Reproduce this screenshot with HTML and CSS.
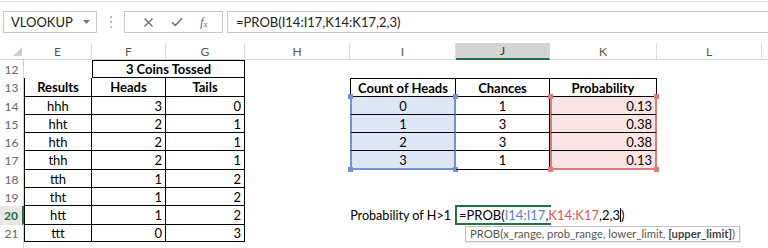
FILE: index.html
```html
<!DOCTYPE html>
<html>
<head>
<meta charset="utf-8">
<link rel="stylesheet" href="styles.css">
</head>
<body>
<div class="topline"></div>
<div class="fbar">
  <div class="namebox"><span class="nb-text">VLOOKUP</span><svg class="nb-arrow" width="7" height="4" viewBox="0 0 7 4"><path d="M0 0H7L3.5 4Z" fill="#7a7a7a"/></svg></div>
  <div class="grip"><i></i><i></i><i></i></div>
  <div class="btns">
    <svg class="ic" width="11" height="11" viewBox="0 0 11 11"><path d="M1.5 1.5L9.5 9.5M9.5 1.5L1.5 9.5" stroke="#6f6f6f" stroke-width="1.4" fill="none"/></svg>
    <svg class="ic" width="12" height="10" viewBox="0 0 12 10"><path d="M1 5.2L4.3 8.4L11 1.2" stroke="#6f6f6f" stroke-width="1.5" fill="none"/></svg>
    <span class="fx"><i>f</i><sub>x</sub></span>
  </div>
  <div class="formula">=PROB(I14:I17,K14:K17,2,3)</div>
</div>
<div class="sheet">
  <div class="row hdr">
    <div class="corner"><svg width="9" height="9" viewBox="0 0 9 9"><path d="M9 0V9H0Z" fill="#cfcfcf"/></svg></div>
    <div class="ch">E</div><div class="ch">F</div><div class="ch">G</div><div class="ch">H</div><div class="ch">I</div><div class="ch sel">J</div><div class="ch">K</div><div class="ch">L</div><div class="ch last"></div>
  </div>
  <div class="row h18">
    <div class="rh">12</div><div class="c"></div><div class="c t bl bt br bb b span2">3 Coins Tossed</div><div class="c"></div><div class="c"></div><div class="c"></div><div class="c"></div><div class="c"></div><div class="c"></div>
  </div>
  <div class="row h19">
    <div class="rh">13</div><div class="c t bl br bb b ctr">Results</div><div class="c t br bb b ctr">Heads</div><div class="c t br bb b ctr">Tails</div><div class="c"></div><div class="c t bl bt br bb b ctr">Count of Heads</div><div class="c t bt br bb b ctr">Chances</div><div class="c t bt br bb b ctr">Probability</div><div class="c"></div><div class="c"></div>
  </div>
  <div class="row h18">
    <div class="rh">14</div><div class="c t bl br bb ctr">hhh</div><div class="c t br bb num">3</div><div class="c t br bb num">0</div><div class="c"></div><div class="c t rb rb-top ctr">0</div><div class="c t br bb ctr">1</div><div class="c t rr rr-top num">0.13</div><div class="c"></div><div class="c"></div>
  </div>
  <div class="row h18">
    <div class="rh">15</div><div class="c t bl br bb ctr">hht</div><div class="c t br bb num">2</div><div class="c t br bb num">1</div><div class="c"></div><div class="c t rb ctr">1</div><div class="c t br bb ctr">3</div><div class="c t rr num">0.38</div><div class="c"></div><div class="c"></div>
  </div>
  <div class="row h18">
    <div class="rh">16</div><div class="c t bl br bb ctr">hth</div><div class="c t br bb num">2</div><div class="c t br bb num">1</div><div class="c"></div><div class="c t rb ctr">2</div><div class="c t br bb ctr">3</div><div class="c t rr num">0.38</div><div class="c"></div><div class="c"></div>
  </div>
  <div class="row h19">
    <div class="rh">17</div><div class="c t bl br bb ctr">thh</div><div class="c t br bb num">2</div><div class="c t br bb num">1</div><div class="c"></div><div class="c t rb rb-bot ctr">3</div><div class="c t br bb ctr">1</div><div class="c t rr rr-bot num">0.13</div><div class="c"></div><div class="c"></div>
  </div>
  <div class="row h18">
    <div class="rh">18</div><div class="c t bl br bb ctr">tth</div><div class="c t br bb num">1</div><div class="c t br bb num">2</div><div class="c"></div><div class="c"></div><div class="c"></div><div class="c"></div><div class="c"></div><div class="c"></div>
  </div>
  <div class="row h18">
    <div class="rh">19</div><div class="c t bl br bb ctr">tht</div><div class="c t br bb num">1</div><div class="c t br bb num">2</div><div class="c"></div><div class="c"></div><div class="c"></div><div class="c"></div><div class="c"></div><div class="c"></div>
  </div>
  <div class="row h18">
    <div class="rh act">20</div><div class="c t bl br bb ctr">htt</div><div class="c t br bb num">1</div><div class="c t br bb num">2</div><div class="c"></div><div class="c label">Probability of H&gt;1</div><div class="c t active"><span class="edit">=PROB(<span class="ref-b">I14:I17</span>,<span class="ref-r">K14:K17</span>,2,3<span class="caret"></span>)</span><div class="tip">PROB(x_range, prob_range, lower_limit, <b>[upper_limit]</b>)</div></div><div class="c"></div><div class="c"></div><div class="c"></div>
  </div>
  <div class="row h18">
    <div class="rh">21</div><div class="c t bl br bb ctr">ttt</div><div class="c t br bb num">0</div><div class="c t br bb num">3</div><div class="c"></div><div class="c"></div><div class="c"></div><div class="c"></div><div class="c"></div><div class="c"></div>
  </div>
  <div class="row h6">
    <div class="rh"></div>
  </div>
</div>
</body>
</html>
```

FILE: styles.css
```css
* { box-sizing: border-box; }
html, body { margin: 0; padding: 0; background: #fff; }
body {
  width: 768px;
  height: 248px;
  overflow: hidden;
  font-family: Lato, "Open Sans", sans-serif;
  color: #000;
}
.topline { height: 1px; margin-top: 1px; background: #dcdcdc; }

.fbar { display: flex; height: 22px; margin-top: 9px; }
.namebox {
  margin-left: 3px; width: 94px;
  border: 1px solid #c8c8c8;
  display: flex; align-items: center; justify-content: space-between;
  padding: 0 6px 0 7px;
  font-size: 13px; color: #222;
}
.grip { width: 27px; display: flex; flex-direction: column; align-items: center; justify-content: center; gap: 3px; }
.grip i { width: 2px; height: 2px; background: #bcbcbc; }
.btns {
  width: 99px; border: 1px solid #c8c8c8;
  display: flex; align-items: center; justify-content: space-around;
  padding: 0 6px 0 10px;
}
.fx { font-family: "Liberation Serif", serif; color: #6f6f6f; font-size: 13px; }
.fx sub { font-size: 9px; font-style: italic; vertical-align: -1px; }
.formula {
  margin-left: 4px; flex: 1;
  border: 1px solid #c8c8c8; border-right: none;
  padding-left: 8px;
  display: flex; align-items: center;
  font-size: 13px; color: #222;
}

.sheet { margin-top: 10px; }
.row {
  display: grid;
  grid-template-columns: 24px 68px 74px 79px 105px 106px 94px 107px 105px 6px;
}
.hdr { height: 17px; }
.h18 { height: 18px; }
.h19 { height: 19px; }
.h6 { height: 6px; }

.corner { display: flex; align-items: flex-end; justify-content: flex-end; padding: 0 2px 3px 0; border-bottom: 1px solid #d4d4d4; }
.ch {
  border-right: 1px solid #dcdcdc; border-bottom: 1px solid #d4d4d4;
  display: flex; align-items: center; justify-content: center;
  font-size: 12px; color: #555;
}
.ch.sel { background: #d4d4d4; border-bottom: 2px solid #217346; color: #333; }
.ch.last { border-right: none; }

.rh {
  border-right: 1px solid #d4d4d4;
  display: flex; align-items: center; justify-content: center;
  font-size: 12px; color: #666;
}
.rh.act { color: #217346; font-weight: bold; border-right: 2px solid #217346; background: #e8e8e8; }

.c { position: relative; font-size: 13px; display: flex; align-items: center; white-space: nowrap; }
.t { padding: 0 3px; }
.bl { border-left: 1px solid #000; }
.bt { border-top: 1px solid #000; }
.br { border-right: 1px solid #000; }
.bb { border-bottom: 1px solid #000; }
.b { font-weight: bold; }
.span2 { grid-column: span 2; justify-content: center; }
.ctr { justify-content: center; }
.num { justify-content: flex-end; }

.rb { background: #dde7f6; border-left: 2px solid #6f93d8; border-right: 2px solid #6f93d8; border-bottom: 1px solid #000; }
.rb-bot { border-bottom: 2px solid #6f93d8; }
.rr { background: #fbe4e4; border-left: 2px solid #e07b7b; border-right: 2px solid #e07b7b; border-bottom: 1px solid #000; }
.rr-bot { border-bottom: 2px solid #e07b7b; }

.rb-top::before, .rb-top::after, .rb-bot::before, .rb-bot::after,
.rr-top::before, .rr-top::after, .rr-bot::before, .rr-bot::after {
  content: ""; position: absolute; width: 5px; height: 5px;
}
.rb-top::before, .rb-top::after, .rb-bot::before, .rb-bot::after { background: #6f93d8; }
.rr-top::before, .rr-top::after, .rr-bot::before, .rr-bot::after { background: #e07b7b; }
.rb-top::before, .rr-top::before { left: -4px; top: -3px; }
.rb-top::after, .rr-top::after { right: -4px; top: -3px; }
.rb-bot::before, .rr-bot::before { left: -4px; bottom: -4px; }
.rb-bot::after, .rr-bot::after { right: -4px; bottom: -4px; }

.label { justify-content: flex-end; padding-right: 5px; font-size: 12.6px; }
.active { border: 2px solid #217346; margin: -1px 0 0 -1px; width: 96px; height: 20px; padding-left: 2px; overflow: visible; z-index: 2; }
.edit { background: #fff; position: relative; z-index: 3; }
.ref-b { color: #5b82c9; }
.ref-r { color: #d9585b; }
.caret { display: inline-block; width: 1px; height: 14px; background: #000; vertical-align: -2px; }
.tip {
  position: absolute; left: 8px; top: 19px;
  border: 1px solid #c0c0c0; background: #fff;
  box-shadow: 1px 1px 1px rgba(0,0,0,0.08);
  font-size: 11.3px; color: #555; padding: 0 4px; height: 16px; line-height: 14px;
  z-index: 4;
}
.tip b { color: #444; }
```
